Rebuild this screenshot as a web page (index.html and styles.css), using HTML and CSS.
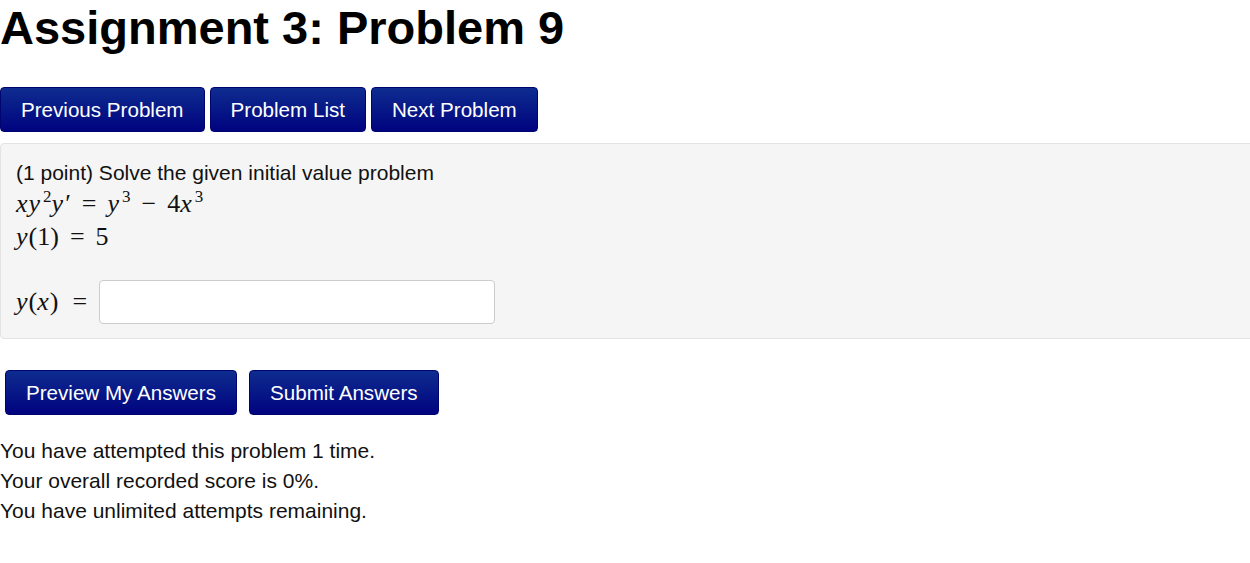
FILE: index.html
```html
<!DOCTYPE html>
<html>
<head>
<meta charset="utf-8">
<title>Assignment 3: Problem 9</title>
<link rel="stylesheet" href="styles.css">
</head>
<body>
<h1 class="title">Assignment 3: Problem 9</h1>
<div class="nav">
  <button class="btn">Previous Problem</button>
  <button class="btn">Problem List</button>
  <button class="btn">Next Problem</button>
</div>
<div class="problem">
  <div class="line intro">(1 point) Solve the given initial value problem</div>
  <div class="line math eq1"><i>x</i><i>y</i><sup>2</sup><i>y</i><span class="prime">′</span><span class="op">=</span><i>y</i><sup>3</sup><span class="op">−</span>4<i>x</i><sup>3</sup></div>
  <div class="line math eq2"><i>y</i>(1)<span class="op">=</span>5</div>
  <div class="answer">
    <span class="math"><i>y</i>(<i>x</i>)<span class="op">=</span></span>
    <input class="field" type="text">
  </div>
</div>
<div class="actions">
  <button class="btn">Preview My Answers</button>
  <button class="btn">Submit Answers</button>
</div>
<div class="status">
  <div>You have attempted this problem 1 time.</div>
  <div>Your overall recorded score is 0%.</div>
  <div>You have unlimited attempts remaining.</div>
</div>
</body>
</html>
```

FILE: styles.css
```css
html, body {
  margin: 0;
  padding: 0;
  background: #fff;
}
body {
  font-family: "Liberation Sans", Arial, sans-serif;
  color: #111;
  width: 1250px;
  overflow: hidden;
}
.title {
  margin: 0;
  padding-top: 2px;
  font-size: 47px;
  line-height: 52px;
  font-weight: bold;
  color: #000;
}
.nav {
  display: flex;
  gap: 5px;
  margin-top: 33px;
}
.btn {
  font-family: "Liberation Sans", Arial, sans-serif;
  font-size: 20.6px;
  height: 45px;
  padding: 0 20px;
  border: 1px solid #00046e;
  border-radius: 4px;
  background: linear-gradient(#0e2c8f, #00037f);
  color: #fff;
  cursor: pointer;
}
.problem {
  margin-top: 11px;
  margin-right: -10px;
  background: #f5f5f5;
  border: 1px solid #e3e3e3;
  border-radius: 4px;
  padding: 17px 15px 14px 14px;
  height: 196px;
  box-sizing: border-box;
}
.line {
  color: #111;
}
.intro {
  font-size: 21px;
  line-height: 24px;
  padding-left: 1px;
}
.math {
  font-family: "Liberation Serif", "Times New Roman", serif;
  font-size: 26px;
  color: #111;
  padding-left: 1px;
}
.math i {
  font-style: italic;
  padding-right: 1px;
}
.math sup {
  font-size: 17px;
  vertical-align: 0;
  position: relative;
  top: -10px;
  padding-left: 2px;
}
.math .prime {
  padding-left: 1px;
}
.math .op {
  margin: 0 11px;
}
.eq1 {
  line-height: 37px;
}
.eq2 {
  line-height: 24px;
}
.answer {
  display: flex;
  align-items: center;
  gap: 12px;
  margin-top: 31px;
}
.answer .math {
  line-height: 44px;
}
.answer .op {
  margin: 0 0 0 14px;
}
.field {
  width: 396px;
  height: 44px;
  box-sizing: border-box;
  border: 1px solid #cccccc;
  border-radius: 4px;
  background: #fff;
  font-size: 18px;
}
.actions {
  display: flex;
  gap: 12px;
  margin: 31px 0 0 5px;
}
.status {
  margin-top: 21px;
  font-size: 21px;
  line-height: 30px;
  color: #111;
}
```
